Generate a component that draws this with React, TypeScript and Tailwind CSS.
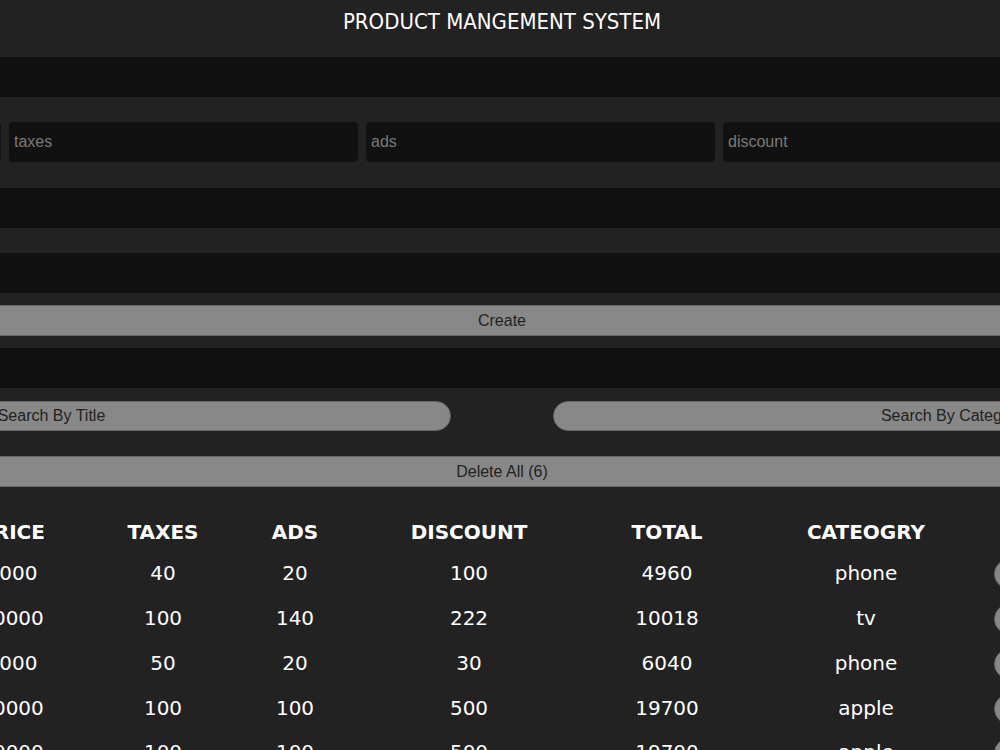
import { useState } from "react";

type Product = {
  id: number;
  title: string;
  price: number;
  taxes: number;
  ads: number;
  discount: number;
  category: string;
};

const products: Product[] = [
  { id: 1, title: "iphone", price: 5000, taxes: 40, ads: 20, discount: 100, category: "phone" },
  { id: 2, title: "lg", price: 10000, taxes: 100, ads: 140, discount: 222, category: "tv" },
  { id: 3, title: "samsung", price: 6000, taxes: 50, ads: 20, discount: 30, category: "phone" },
  { id: 4, title: "macbook", price: 20000, taxes: 100, ads: 100, discount: 500, category: "apple" },
  { id: 5, title: "macbook", price: 20000, taxes: 100, ads: 100, discount: 500, category: "apple" },
  { id: 6, title: "ipad", price: 8000, taxes: 60, ads: 40, discount: 100, category: "apple" },
];

const inputCls =
  "h-[40px] bg-[#111] rounded-[4px] px-[5px] text-[16px] text-white outline-none placeholder:text-[#7a7a7a]";
const btnCls =
  "bg-[#888] border border-[#666] text-[#222] text-[16px] cursor-pointer";

export default function App() {
  const [search, setSearch] = useState("");

  const total = (p: Product) => p.price + p.taxes + p.ads - p.discount;

  return (
    <div
      className="min-h-[750px] w-full overflow-hidden bg-[#222] flex justify-center"
      style={{ fontFamily: '"Liberation Sans", Arial, sans-serif' }}
    >
      <div className="w-[1700px] shrink-0 ml-[4px] flex flex-col">
        <h2
          className="mt-[9px] text-center text-[22px] leading-[26px] text-white uppercase font-normal"
          style={{ fontFamily: '"DejaVu Sans Condensed", "DejaVu Sans", sans-serif' }}
        >
          Product Mangement System
        </h2>

        <input className={`${inputCls} mt-[22px] w-full`} placeholder="title" />

        <div className="mt-[25px] flex gap-[8px] items-center">
          <input className={`${inputCls} w-[349px]`} placeholder="price" />
          <input className={`${inputCls} w-[349px]`} placeholder="taxes" />
          <input className={`${inputCls} w-[349px]`} placeholder="ads" />
          <input className={`${inputCls} w-[349px]`} placeholder="discount" />
          <small className="flex-1 h-[30px] flex items-center px-2 rounded-[4px] bg-[#a00d02] text-white text-[14px]">
            Total:
          </small>
        </div>

        <input className={`${inputCls} mt-[26px] w-full`} placeholder="count" />
        <input className={`${inputCls} mt-[25px] w-full`} placeholder="category" />

        <button className={`${btnCls} mt-[12px] h-[31px] w-full`}>Create</button>

        <input
          className={`${inputCls} mt-[12px] w-full`}
          placeholder="search"
          value={search}
          onChange={(e) => setSearch(e.target.value)}
        />

        <div className="mt-[13px] flex justify-between">
          <button className={`${btnCls} h-[30px] w-[799px] rounded-full`}>Search By Title</button>
          <button className={`${btnCls} h-[30px] w-[799px] rounded-full`}>Search By Category</button>
        </div>

        <button className={`${btnCls} mt-[25px] h-[31px] w-full`}>
          Delete All ({products.length})
        </button>

        <table
          className="mt-[25px] w-full table-fixed text-white text-[20px] text-center"
          style={{ fontFamily: '"DejaVu Sans", Verdana, sans-serif' }}
        >
          <colgroup>
            <col className="w-[100px]" />
            <col className="w-[188px]" />
            <col className="w-[144px]" />
            <col className="w-[158px]" />
            <col className="w-[106px]" />
            <col className="w-[242px]" />
            <col className="w-[154px]" />
            <col className="w-[244px]" />
            <col className="w-[182px]" />
            <col className="w-[182px]" />
          </colgroup>
          <thead>
            <tr className="h-[39px] uppercase">
              <th className="font-bold">id</th>
              <th className="font-bold">title</th>
              <th className="font-bold">price</th>
              <th className="font-bold">taxes</th>
              <th className="font-bold">ads</th>
              <th className="font-bold">discount</th>
              <th className="font-bold">total</th>
              <th className="font-bold">cateogry</th>
              <th className="font-bold">update</th>
              <th className="font-bold">delete</th>
            </tr>
          </thead>
          <tbody>
            {products.map((p) => (
              <tr key={p.id} className="h-[44.75px]">
                <td>{p.id}</td>
                <td>{p.title}</td>
                <td>{p.price}</td>
                <td>{p.taxes}</td>
                <td>{p.ads}</td>
                <td>{p.discount}</td>
                <td>{total(p)}</td>
                <td>{p.category}</td>
                <td className="px-[6px]">
                  <button className={`${btnCls} h-[30px] w-full rounded-full`}>update</button>
                </td>
                <td className="px-[6px]">
                  <button className={`${btnCls} h-[30px] w-full rounded-full`}>delete</button>
                </td>
              </tr>
            ))}
          </tbody>
        </table>
      </div>
    </div>
  );
}
